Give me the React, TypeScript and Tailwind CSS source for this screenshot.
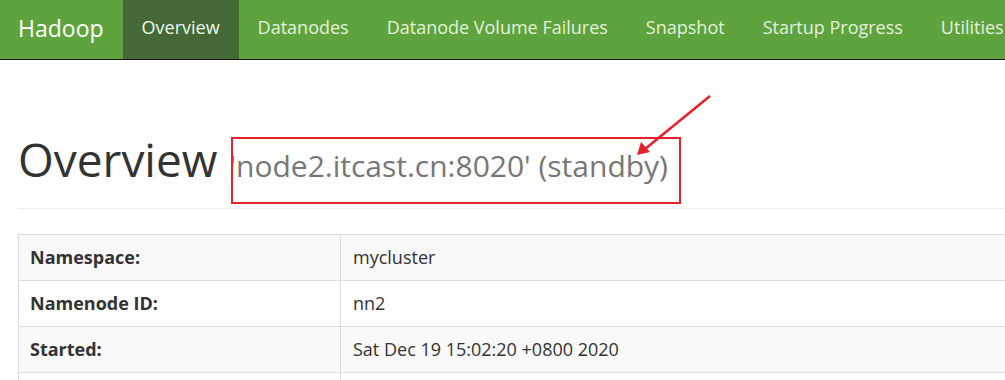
import React from 'react'

const NAV = ['Overview', 'Datanodes', 'Datanode Volume Failures', 'Snapshot', 'Startup Progress', 'Utilities']

const ROWS = [
  { label: 'Namespace:', value: 'mycluster' },
  { label: 'Namenode ID:', value: 'nn2' },
  { label: 'Started:', value: 'Sat Dec 19 15:02:20 +0800 2020' },
  { label: '', value: '' },
]

function Navbar() {
  return (
    <div className="flex h-[60px] items-stretch border-b border-[#1a1a1a] bg-[#5fa33e] whitespace-nowrap">
      <div className="flex items-center pb-[3px] pl-[18px] pr-[19px] text-[23px] text-white">Hadoop</div>
      {NAV.map((item, i) => (
        <div
          key={item}
          className={
            i === 0
              ? 'flex items-center pb-[4px] px-[19px] text-[18px] text-[#eef7ea] bg-[#446937]'
              : 'flex items-center pb-[4px] px-[19px] text-[18px] text-[#e2f1dc]'
          }
        >
          {item}
        </div>
      ))}
    </div>
  )
}

export default function App() {
  return (
    <div className="relative h-[380px] w-full overflow-hidden bg-white font-['Open_Sans',sans-serif] text-[#333]">
      <Navbar />
      <div className="w-[1060px] pl-[18px]">
        <h1 className="mt-[72px] h-[54px] text-[46px] leading-[54px] font-normal whitespace-nowrap">
          Overview <span className="text-[30px] leading-none text-[#777]">'node2.itcast.cn:8020' (standby)</span>
        </h1>
        <div className="mt-[22px] h-px bg-[#eee]" />
        <table className="mt-[25px] w-full border-collapse text-[18px]">
          <tbody>
            {ROWS.map((r, i) => (
              <tr key={i} className={i % 2 === 0 ? 'bg-[#f9f9f9]' : 'bg-white'}>
                <td className="h-[46px] w-[322px] border border-[#ddd] pl-[11px] font-bold">{r.label}</td>
                <td className="h-[46px] border border-[#ddd] pl-[12px]">{r.value}</td>
              </tr>
            ))}
          </tbody>
        </table>
      </div>

      {/* annotation */}
      <div className="absolute left-[231px] top-[137px] h-[67px] w-[450px] border-2 border-[#e8202a]" />
      <svg className="absolute left-0 top-0" width="1005" height="380" viewBox="0 0 1005 380">
        <line x1="710" y1="96" x2="645" y2="149" stroke="#e8202a" strokeWidth="2.5" />
        <polygon points="637,155 641,142 650,152" fill="#e8202a" />
      </svg>
    </div>
  )
}
